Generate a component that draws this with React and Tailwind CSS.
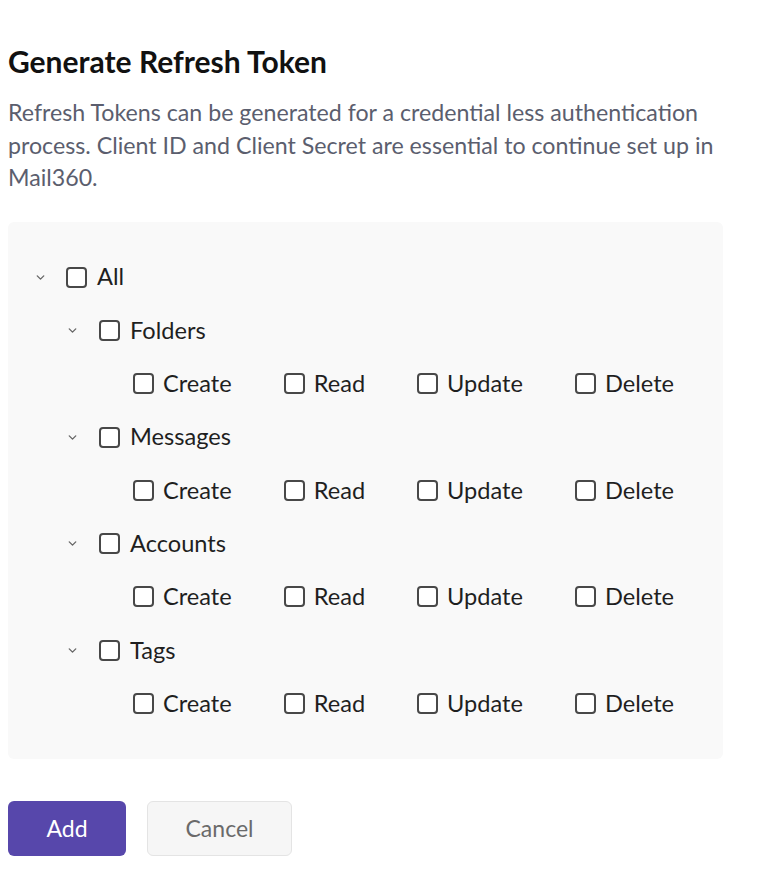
import { ChevronDown } from "lucide-react";

const groups = ["Folders", "Messages", "Accounts", "Tags"];
const actions = ["Create", "Read", "Update", "Delete"];

const Box = () => (
  <span className="w-[21px] h-[21px] rounded-[4px] border-2 border-[#484848] bg-white flex-shrink-0" />
);

const Chevron = () => (
  <span className="w-[22px] flex justify-center text-[#666]">
    <ChevronDown size={13} strokeWidth={2.5} />
  </span>
);

export default function App() {
  return (
    <div className="min-h-[876px] w-[760px] bg-white pl-2 pt-[44px] text-[#1f1f1f]" style={{ fontFamily: "Lato, 'Open Sans', sans-serif" }}>
      <h1 className="text-[30px] font-bold leading-[34px] text-[#111]">Generate Refresh Token</h1>
      <p className="mt-[18px] w-[715px] text-[23.2px] leading-[32.5px] text-[#5b5e6e]">
        Refresh Tokens can be generated for a credential less authentication process. Client ID and Client Secret are essential to continue set up in Mail360.
      </p>

      {/* Scopes */}
      <div className="mt-[28px] w-[715px] rounded-md bg-[#f9f9f9] py-[29px] text-[23.6px]">
        <div className="flex h-[53.3px] items-center pl-[21px]">
          <Chevron />
          <span className="ml-[15px] flex items-center gap-[10px]"><Box />All</span>
        </div>
        {groups.map(g => (
          <div key={g}>
            <div className="flex h-[53.3px] items-center pl-[53px]">
              <Chevron />
              <span className="ml-[16px] flex items-center gap-[10px]"><Box />{g}</span>
            </div>
            <div className="flex h-[53.3px] items-center pl-[125px] gap-[52px]">
              {actions.map(a => (
                <span key={a} className="flex items-center gap-[9px]"><Box />{a}</span>
              ))}
            </div>
          </div>
        ))}
      </div>

      <div className="mt-[42px] flex gap-[21px] text-[23px]">
        <button className="w-[118px] h-[55px] rounded-md bg-[#5747ab] text-white">Add</button>
        <button className="w-[145px] h-[55px] rounded-md border border-[#e4e4e4] bg-[#f6f6f6] text-[#6a6a6a]">Cancel</button>
      </div>
    </div>
  );
}
